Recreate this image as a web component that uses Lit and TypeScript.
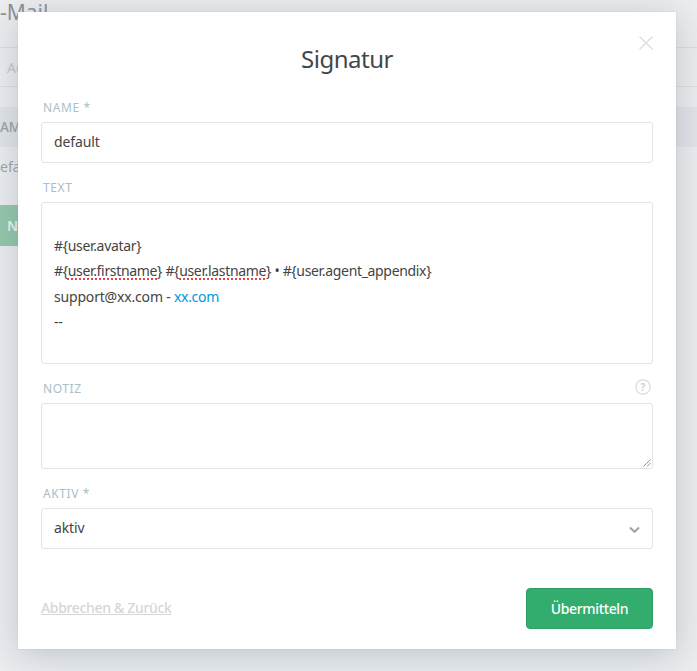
import { LitElement, html, css } from "lit";
import { customElement } from "lit/decorators.js";

@customElement("app-root")
export class AppRoot extends LitElement {
  static styles = css`
    :host {
      display: block;
      position: relative;
      width: 697px;
      height: 671px;
      overflow: hidden;
      background: #eceef0;
      font-family: "Noto Sans", "Open Sans", sans-serif;
      font-size: 14px;
      color: #444;
    }
    .page {
      display: flex;
      flex-direction: column;
      height: 100%;
      color: #a9adb0;
      white-space: nowrap;
    }
    .page-title {
      height: 47px;
      box-sizing: border-box;
      padding-top: 2px;
      font-size: 21px;
      line-height: 20px;
      color: #8d9296;
    }
    .page-filter {
      height: 40px;
      box-sizing: border-box;
      border-top: 1px solid #dcdfe2;
      border-bottom: 1px solid #dcdfe2;
      display: flex;
      align-items: center;
      padding-left: 7px;
      color: #c6c9cc;
    }
    .page-head {
      margin-top: 20px;
      height: 40px;
      box-sizing: border-box;
      padding-bottom: 1px;
      background: #e2e5e8;
      display: flex;
      align-items: center;
      font-size: 13.5px;
      font-weight: 500;
      color: #9ca1a5;
    }
    .page-row {
      height: 40px;
      box-sizing: border-box;
      padding-bottom: 2px;
      display: flex;
      align-items: center;
      color: #a2a6a9;
    }
    .page-new {
      margin-top: 18px;
      height: 41px;
      width: 60px;
      background: #93c8ab;
      color: #eef6f1;
      font-weight: 600;
      display: flex;
      align-items: center;
      padding-left: 7px;
      box-sizing: border-box;
    }
    .modal {
      position: absolute;
      left: 18px;
      top: 12px;
      width: 658px;
      height: 637px;
      box-sizing: border-box;
      background: #fff;
      box-shadow: 0 0 1px rgba(120, 130, 140, 0.4), 0 6px 34px rgba(90, 105, 120, 0.32);
      padding: 0 23px;
      display: flex;
      flex-direction: column;
    }
    .close {
      position: absolute;
      right: 23px;
      top: 24px;
      width: 14px;
      height: 14px;
      display: block;
    }
    h1 {
      margin: 0;
      height: 85px;
      flex: none;
      padding-top: 30px;
      box-sizing: border-box;
      text-align: center;
      font-size: 24px;
      line-height: 34px;
      font-weight: 400;
      letter-spacing: -0.5px;
      color: #41474b;
    }
    .field {
      display: flex;
      flex-direction: column;
      flex: none;
      margin-bottom: 14px;
    }
    .label-row {
      height: 25px;
      flex: none;
      display: flex;
      justify-content: space-between;
      align-items: flex-start;
    }
    label {
      font-size: 12px;
      line-height: 22px;
      letter-spacing: 0.6px;
      color: #a9c0c7;
      padding-left: 2px;
    }
    .help {
      width: 16px;
      height: 16px;
      display: block;
      margin-top: 1px;
      margin-right: 2px;
    }
    .box {
      border: 1px solid #e2e3e4;
      border-radius: 3px;
      box-sizing: border-box;
      background: #fff;
      padding: 0 12px;
      position: relative;
      flex: none;
    }
    .single {
      height: 41px;
      line-height: 38px;
      letter-spacing: -0.12px;
    }
    .rich {
      height: 162px;
      padding-top: 30px;
      line-height: 25.33px;
      letter-spacing: -0.33px;
    }
    .note {
      height: 66px;
    }
    .grip {
      position: absolute;
      right: 1px;
      bottom: 1px;
      width: 8px;
      height: 8px;
      display: block;
    }
    .chev {
      position: absolute;
      right: 12px;
      top: 17px;
      width: 11px;
      height: 8px;
      display: block;
    }
    .rich div {
      white-space: nowrap;
    }
    .rich .contact {
      letter-spacing: -0.18px;
    }
    .spell {
      text-decoration: underline dotted #e8434a 2px;
      text-underline-offset: 2px;
    }
    .link {
      color: #0098d8;
      letter-spacing: -0.33px;
    }
    .footer {
      margin-top: 25px;
      flex: none;
      display: flex;
      justify-content: space-between;
      align-items: center;
    }
    .cancel {
      color: #d5d6d7;
      text-decoration: underline;
      font-weight: 500;
      letter-spacing: -0.33px;
      padding-bottom: 2px;
    }
    .submit {
      width: 127px;
      height: 41px;
      box-sizing: border-box;
      border: 1px solid #2f9d66;
      border-radius: 4px;
      background: #33ad6e;
      color: #fff;
      font: inherit;
      font-weight: 500;
      letter-spacing: -0.35px;
      padding: 0;
    }
  `;

  render() {
    return html`
      <div class="page">
        <div class="page-title">-Mail</div>
        <div class="page-filter">Ad</div>
        <div class="page-head">AM</div>
        <div class="page-row">efa</div>
        <div class="page-new">N</div>
      </div>
      <div class="modal">
        <svg class="close" viewBox="0 0 14 14" fill="none" stroke="#dcdcdc" stroke-width="1.4">
          <path d="M0.5 0.5 13.5 13.5M13.5 0.5 0.5 13.5" />
        </svg>
        <h1>Signatur</h1>
        <div class="field">
          <div class="label-row"><label>NAME *</label></div>
          <div class="box single">default</div>
        </div>
        <div class="field">
          <div class="label-row"><label>TEXT</label></div>
          <div class="box rich">
            <div>#{user.avatar}</div>
            <div>#{<span class="spell">user.firstname</span>} #{<span class="spell">user.lastname</span>} • #{user.agent_appendix}</div>
            <div class="contact">support@xx.com - <span class="link">xx.com</span></div>
            <div>--</div>
          </div>
        </div>
        <div class="field">
          <div class="label-row">
            <label>NOTIZ</label>
            <svg class="help" viewBox="0 0 16 16">
              <circle cx="8" cy="8" r="7.2" fill="none" stroke="#d9d9d9" stroke-width="1.2" />
              <text x="8" y="11.6" text-anchor="middle" font-size="10" font-weight="700" fill="#d2d2d2">?</text>
            </svg>
          </div>
          <div class="box note">
            <svg class="grip" viewBox="0 0 8 8" fill="none" stroke="#777" stroke-width="0.8">
              <path d="M0.5 7.5 7.5 0.5M4 7.5 7.5 4" />
            </svg>
          </div>
        </div>
        <div class="field">
          <div class="label-row"><label>AKTIV *</label></div>
          <div class="box single">
            aktiv
            <svg class="chev" viewBox="0 0 12 8" fill="none" stroke="#a3a3a3" stroke-width="2.2">
              <path d="M1 1.2 6 6 11 1.2" />
            </svg>
          </div>
        </div>
        <div class="footer">
          <span class="cancel">Abbrechen &amp; Zurück</span>
          <button class="submit">Übermitteln</button>
        </div>
      </div>
    `;
  }
}
